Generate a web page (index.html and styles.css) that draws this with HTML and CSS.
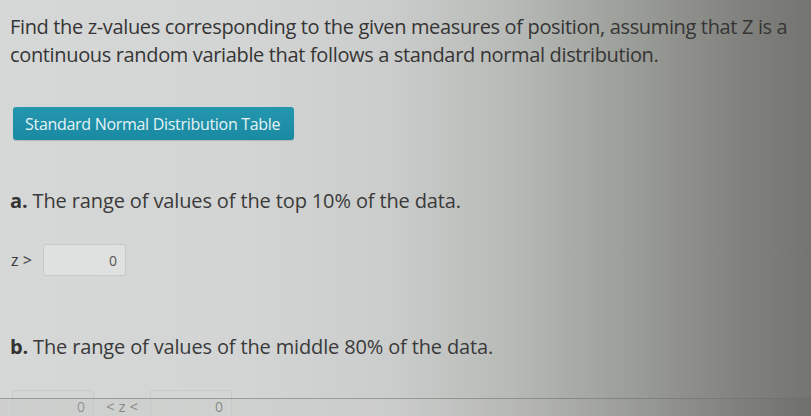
FILE: index.html
```html
<!DOCTYPE html>
<html>
<head>
<meta charset="utf-8">
<link rel="stylesheet" href="styles.css">
</head>
<body>
<div class="screen">
  <div class="content">
    <p class="intro">Find the z-values corresponding to the given measures of position, assuming that Z is a continuous random variable that follows a standard normal distribution.</p>
    <button class="table-btn">Standard Normal Distribution Table</button>
    <p class="question"><b>a.</b> The range of values of the top 10% of the data.</p>
    <div class="answer-row">
      <span class="var">z &gt;</span>
      <span class="box">0</span>
    </div>
    <p class="question q-b"><b>b.</b> The range of values of the middle 80% of the data.</p>
    <div class="answer-row row-b">
      <span class="box">0</span>
      <span class="ineq">&lt; z &lt;</span>
      <span class="box">0</span>
    </div>
  </div>
  <div class="edge"></div>
</div>
</body>
</html>
```
FILE: styles.css
```css
html, body {
  margin: 0;
  padding: 0;
  height: 100%;
  overflow: hidden;
}
body {
  background: linear-gradient(90deg, #d6d8d7 0%, #d3d5d4 30%, #cbcdcc 48%, #b8bab7 63%, #9b9d98 78%, #80817d 92%, #747571 100%);
  font-family: "Open Sans", "Liberation Sans", sans-serif;
  color: #353535;
}
.screen {
  position: relative;
  height: 416px;
  overflow: hidden;
}
.content {
  padding: 13px 0 0 10px;
  display: flex;
  flex-direction: column;
  align-items: flex-start;
}
.intro {
  margin: 0;
  width: 795px;
  font-size: 20px;
  line-height: 28px;
  letter-spacing: -0.35px;
}
.table-btn {
  margin: 38px 0 0 3px;
  height: 33px;
  padding: 0 14px 0 12px;
  border: 0;
  border-radius: 3px;
  background: linear-gradient(180deg, #2496ae 0%, #1a8aa3 100%);
  color: #e6f3f5;
  font-family: "Open Sans", "Liberation Sans", sans-serif;
  font-size: 16px;
  letter-spacing: -0.3px;
  box-shadow: 0 1px 1px rgba(0,0,0,0.15);
}
.question {
  margin: 46px 0 0 0;
  font-size: 20px;
  line-height: 30px;
  letter-spacing: -0.13px;
  color: #3a3a3a;
}
.question b {
  font-weight: 700;
  color: #333;
}
.q-b {
  margin-top: 56px;
  letter-spacing: -0.15px;
}
.answer-row {
  display: flex;
  align-items: center;
  gap: 8px;
  margin-top: 28px;
  font-size: 15px;
  color: #444;
}
.var {
  width: 24px;
  margin-left: 1px;
  font-size: 16px;
  color: #3a3a3a;
}
.box {
  width: 83px;
  height: 32px;
  box-sizing: border-box;
  border: 1px solid #c6cac9;
  border-radius: 3px;
  background: #dfe1e0;
  display: flex;
  align-items: center;
  justify-content: flex-end;
  padding-right: 8px;
  color: #555;
  font-size: 14px;
}
.row-b {
  margin-top: 28px;
  margin-left: 2px;
  gap: 4px;
}
.row-b .box {
  width: 82px;
  background: #d4d6d5;
}
.ineq {
  width: 48px;
  text-align: center;
  font-size: 15px;
}
.edge {
  position: absolute;
  left: 0;
  right: 0;
  top: 398px;
  height: 18px;
  border-top: 1px solid rgba(110,112,108,0.55);
  background: linear-gradient(90deg, rgba(200,202,200,0.6) 0%, rgba(200,202,200,0.3) 50%, rgba(90,92,88,0.2) 100%);
}
```
